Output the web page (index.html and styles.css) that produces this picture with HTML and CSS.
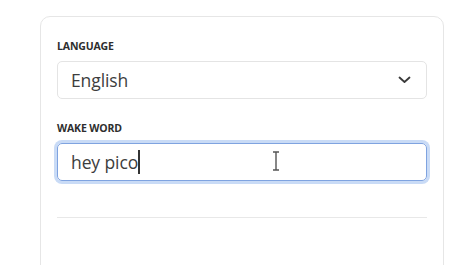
FILE: index.html
```html
<!DOCTYPE html>
<html>
<head>
<meta charset="utf-8">
<link rel="stylesheet" href="styles.css">
</head>
<body>
<div class="card">
  <div class="field">
    <div class="label">LANGUAGE</div>
    <div class="select">
      <span class="value">English</span>
      <svg class="chev" width="13" height="8" viewBox="0 0 13 8"><path d="M1.5 1.5 L6.5 6 L11.5 1.5" fill="none" stroke="#3a3a3a" stroke-width="1.8" stroke-linecap="round" stroke-linejoin="round"/></svg>
    </div>
  </div>
  <div class="field">
    <div class="label">WAKE WORD</div>
    <div class="input">
      <span class="value">hey pico</span><span class="caret"></span>
      <svg class="ibeam" width="8" height="20" viewBox="0 0 8 20"><path d="M1 1 H7 M4 1 V19 M1 19 H7" fill="none" stroke="#555" stroke-width="1.4"/></svg>
    </div>
  </div>
  <div class="divider"></div>
</div>
</body>
</html>
```
FILE: styles.css
```css
html, body {
  margin: 0;
  padding: 0;
  background: #ffffff;
  overflow: hidden;
}
body {
  padding: 16px 0 0 40px;
  font-family: "Open Sans", "Noto Sans", sans-serif;
}
.card {
  width: 370px;
  height: 300px;
  border: 1px solid #e6e6e6;
  border-radius: 10px;
  padding: 22px 16px 0 16px;
  box-sizing: content-box;
}
.field {
  display: flex;
  flex-direction: column;
  gap: 8px;
  margin-bottom: 22px;
}
.label {
  font-size: 10.5px;
  line-height: 14px;
  font-weight: 700;
  color: #2e2e2e;
  letter-spacing: -0.15px;
}
.select, .input {
  height: 38px;
  box-sizing: border-box;
  border-radius: 5px;
  display: flex;
  align-items: center;
  padding: 0 13px;
  position: relative;
}
.select {
  border: 1px solid #e4e4e4;
  justify-content: space-between;
}
.chev {
  margin-right: 2px;
}
.input {
  border: 1.5px solid #7fa3e0;
  box-shadow: 0 0 0 3px #c9dbf6;
}
.value {
  font-size: 17.5px;
  color: #3d3d3d;
  letter-spacing: -0.1px;
}
.caret {
  display: inline-block;
  width: 1.5px;
  height: 24px;
  background: #333;
}
.ibeam {
  position: absolute;
  left: 214px;
  top: 7px;
}
.divider {
  margin-top: 36px;
  height: 1px;
  background: #e8e8e8;
}
```
